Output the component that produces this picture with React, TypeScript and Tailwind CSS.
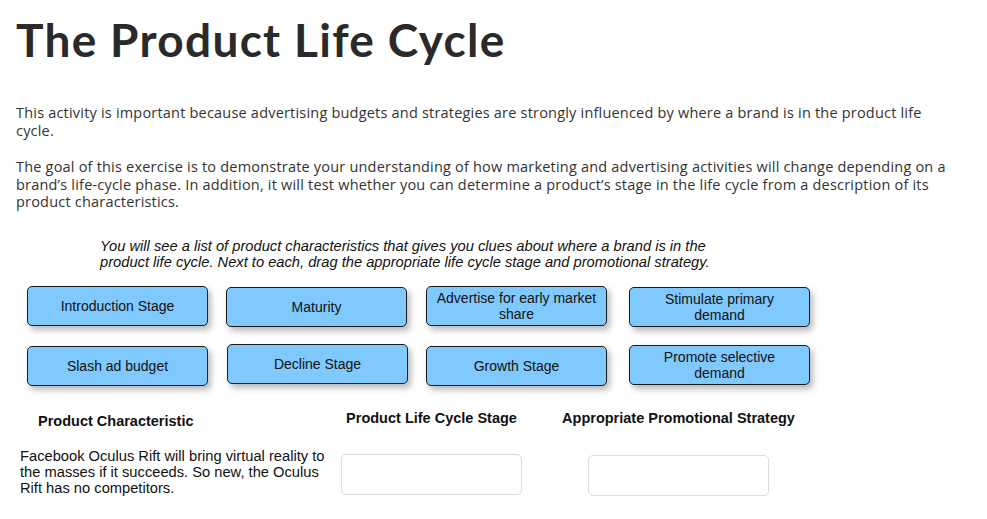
const chips = [
  [
    { label: "Introduction Stage", cls: "ml-[27px] mt-[6px]" },
    { label: "Maturity", cls: "ml-[18px] mt-[7px]" },
    { label: "Advertise for early market share", cls: "ml-[19px] mt-[6px]" },
    { label: "Stimulate primary demand", cls: "ml-[22px] mt-[7px]" },
  ],
  [
    { label: "Slash ad budget", cls: "ml-[27px] mt-[5px]" },
    { label: "Decline Stage", cls: "ml-[19px] mt-[3px]" },
    { label: "Growth Stage", cls: "ml-[18px] mt-[5px]" },
    { label: "Promote selective demand", cls: "ml-[22px] mt-[4px]" },
  ],
];

function Chip({ label, cls }: { label: string; cls: string }) {
  return (
    <div
      className={`${cls} w-[181px] h-[40px] shrink-0 flex items-center justify-center text-center px-2 leading-[16px] text-[14px] text-[#111] bg-[#80c9fe] border border-[#1a1a1a] rounded-[5px] shadow-[3px_4px_6px_rgba(0,0,0,0.28)]`}
    >
      {label}
    </div>
  );
}

export default function App() {
  return (
    <div className="w-[987px] h-[519px] bg-white overflow-hidden font-['Liberation_Sans',Arial,sans-serif]">
      {/* Header + intro */}
      <div className="pl-4 pr-[25px] pt-[12px] text-[#333]">
        <h1 className="font-['Lato','Noto_Sans',sans-serif] text-[46px] leading-[56px] font-bold text-[#2a2a2a] tracking-[1.3px]">
          The Product Life Cycle
        </h1>
        <p className="mt-[36px] font-['Open_Sans','Noto_Sans',sans-serif] text-[14.5px] leading-[17.5px] tracking-[0.2px]">
          This activity is important because advertising budgets and strategies are strongly influenced by where a brand is in the product life cycle.
        </p>
        <p className="mt-[19px] font-['Open_Sans','Noto_Sans',sans-serif] text-[14.5px] leading-[17.5px] tracking-[0.2px]">
          The goal of this exercise is to demonstrate your understanding of how marketing and advertising activities will change depending on a brand’s life-cycle phase. In addition, it will test whether you can determine a product’s stage in the life cycle from a description of its product characteristics.
        </p>
      </div>

      {/* Instructions */}
      <p className="ml-[100px] mt-[27px] w-[625px] text-[14.7px] leading-[16px] italic text-[#111]">
        You will see a list of product characteristics that gives you clues about where a brand is in the product life cycle. Next to each, drag the appropriate life cycle stage and promotional strategy.
      </p>

      {/* Draggable chips */}
      <div className="mt-[10px]">
        {chips.map((row, i) => (
          <div key={i} className={`flex items-start ${i === 1 ? "mt-[14px]" : ""}`}>
            {row.map((c) => (
              <Chip key={c.label} label={c.label} cls={c.cls} />
            ))}
          </div>
        ))}
      </div>

      {/* Matching table */}
      <div className="flex items-start mt-[24px] text-[#111]">
        <div className="ml-[20px] w-[312px]">
          <div className="pl-[18px] pt-[3px] text-[14.5px] font-bold leading-[16px]">
            Product Characteristic
          </div>
          <p className="mt-[19px] text-[14.7px] leading-[16px]">
            Facebook Oculus Rift will bring virtual reality to the masses if it succeeds. So new, the Oculus Rift has no competitors.
          </p>
        </div>
        <div className="ml-[9px] w-[181px] flex flex-col items-center">
          <div className="whitespace-nowrap text-[14.5px] font-bold leading-[16px]">
            Product Life Cycle Stage
          </div>
          <div className="mt-[28px] w-[181px] h-[41px] border border-[#dcdcdc] rounded-[5px]" />
        </div>
        <div className="ml-[66px] w-[181px] flex flex-col items-center">
          <div className="whitespace-nowrap text-[14.5px] font-bold leading-[16px]">
            Appropriate Promotional Strategy
          </div>
          <div className="mt-[29px] w-[181px] h-[41px] border border-[#dcdcdc] rounded-[5px]" />
        </div>
      </div>
    </div>
  );
}
